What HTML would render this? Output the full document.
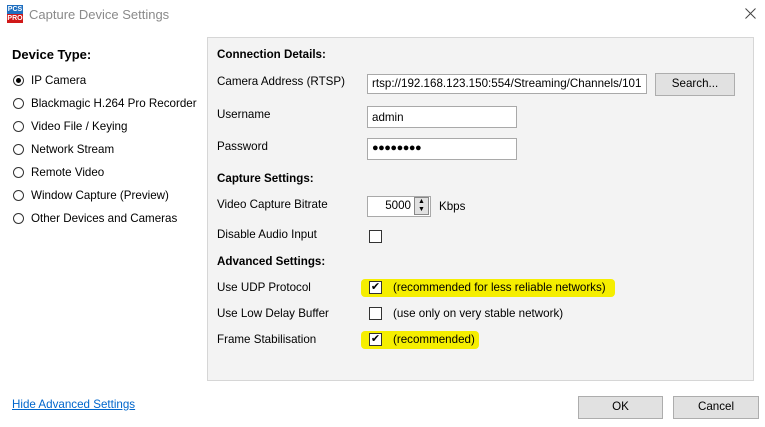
<!DOCTYPE html>
<html><head><style>
body{margin:0;width:765px;height:427px;background:#fff;font-family:"Liberation Sans",sans-serif;font-size:11.6px;color:#000;position:relative;overflow:hidden}
.a{position:absolute;white-space:nowrap}
.b{font-weight:bold}
.panel{position:absolute;left:207px;top:37px;width:545px;height:342px;background:#f3f3f3;border:1px solid #d6d6d6}
.in{position:absolute;background:#fff;border:1px solid #a9a9a9;height:20px;box-sizing:border-box;padding:2px 4px;font-size:11.6px;overflow:hidden;white-space:nowrap}
.btn{position:absolute;background:#e1e1e1;border:1px solid #adadad;box-sizing:border-box;text-align:center;line-height:20px}
.radio{position:absolute;left:13px;width:11px;height:11px;border:1px solid #333;border-radius:50%;box-sizing:border-box;background:#fff}
.cb{position:absolute;width:13px;height:13px;border:1px solid #333;box-sizing:border-box;background:#fff}
.hl{position:absolute;background:#f5ee00;border-radius:4px}
</style></head><body>
<div class="a" style="left:7px;top:5px;width:16px;height:18px">
<div style="height:9px;background:#1f6fc0;color:#fff;font-size:7px;font-weight:bold;line-height:9px;text-align:center">PCS</div>
<div style="height:9px;background:#d01818;color:#fff;font-size:7px;font-weight:bold;line-height:9px;text-align:center">PRO</div></div>
<div class="a" style="left:29px;top:7px;font-size:13px;color:#8a8a8a">Capture Device Settings</div>
<svg class="a" style="left:745px;top:8px" width="11" height="11"><path d="M0.5 0.5L10.5 10.5M10.5 0.5L0.5 10.5" stroke="#444" stroke-width="1"/></svg>

<div class="a b" style="left:12px;top:47px;font-size:13px">Device Type:</div>
<div class="radio" style="top:75px"><div style="width:5px;height:5px;background:#000;border-radius:50%;margin:2px"></div></div>
<div class="a" style="left:31px;top:74px">IP Camera</div>
<div class="radio" style="top:98px"></div><div class="a" style="left:31px;top:97px">Blackmagic H.264 Pro Recorder</div>
<div class="radio" style="top:121px"></div><div class="a" style="left:31px;top:120px">Video File / Keying</div>
<div class="radio" style="top:144px"></div><div class="a" style="left:31px;top:143px">Network Stream</div>
<div class="radio" style="top:167px"></div><div class="a" style="left:31px;top:166px">Remote Video</div>
<div class="radio" style="top:190px"></div><div class="a" style="left:31px;top:189px">Window Capture (Preview)</div>
<div class="radio" style="top:213px"></div><div class="a" style="left:31px;top:212px">Other Devices and Cameras</div>

<div class="panel"></div>
<div class="a b" style="left:217px;top:48px">Connection Details:</div>
<div class="a" style="left:217px;top:75px">Camera Address (RTSP)</div>
<div class="in" style="left:367px;top:74px;width:280px">rtsp://192.168.123.150:554/Streaming/Channels/101</div>
<div class="btn" style="left:655px;top:73px;width:80px;height:23px">Search...</div>
<div class="a" style="left:217px;top:108px">Username</div>
<div class="in" style="left:367px;top:106px;width:150px;height:22px;padding-top:4px">admin</div>
<div class="a" style="left:217px;top:140px">Password</div>
<div class="in" style="left:367px;top:138px;width:150px;height:22px;padding-top:3px;font-size:11px;letter-spacing:-0.5px">●●●●●●●●</div>
<div class="a b" style="left:217px;top:172px">Capture Settings:</div>
<div class="a" style="left:217px;top:198px">Video Capture Bitrate</div>
<div class="in" style="left:367px;top:196px;width:64px;height:21px;text-align:right;padding-right:19px">5000</div>
<div class="a" style="left:414px;top:197px;width:15px;height:18px;background:#e1e1e1;border:1px solid #888;box-sizing:border-box;font-size:7px;line-height:8px;text-align:center">▲<br>▼</div>
<div class="a" style="left:439px;top:200px">Kbps</div>
<div class="a" style="left:217px;top:228px">Disable Audio Input</div>
<div class="cb" style="left:369px;top:230px"></div>
<div class="a b" style="left:217px;top:255px">Advanced Settings:</div>
<div class="hl" style="left:361px;top:279px;width:254px;height:18px"></div>
<div class="hl" style="left:361px;top:331px;width:118px;height:18px"></div>
<div class="a" style="left:217px;top:281px">Use UDP Protocol</div>
<div class="cb" style="left:369px;top:281px;font-size:11px;line-height:11px;text-align:center">✔</div>
<div class="a" style="left:393px;top:281px">(recommended for less reliable networks)</div>
<div class="a" style="left:217px;top:307px">Use Low Delay Buffer</div>
<div class="cb" style="left:369px;top:307px"></div>
<div class="a" style="left:393px;top:307px">(use only on very stable network)</div>
<div class="a" style="left:217px;top:333px">Frame Stabilisation</div>
<div class="cb" style="left:369px;top:333px;font-size:11px;line-height:11px;text-align:center">✔</div>
<div class="a" style="left:393px;top:333px">(recommended)</div>

<div class="a" style="left:12px;top:398px;color:#0066cc;text-decoration:underline">Hide Advanced Settings</div>
<div class="btn" style="left:578px;top:396px;width:85px;height:23px">OK</div>
<div class="btn" style="left:673px;top:396px;width:86px;height:23px">Cancel</div>
</body></html>
